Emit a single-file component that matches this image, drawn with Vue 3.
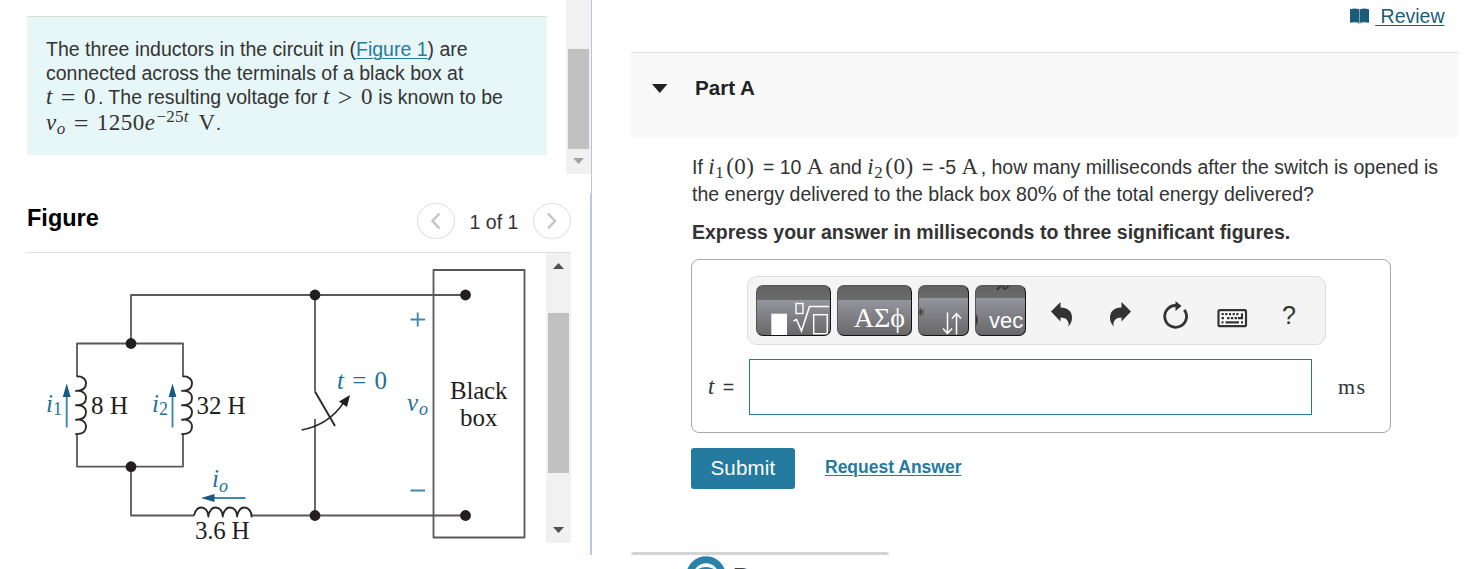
<script setup>
const coilV = (x, y) => `M${x} ${y}` + 'c3 -.5 9 1 9 7c0 6 -5 7.400 -10 7.400l1 0'.repeat(4)
const coilH = 'M194 515.5' + 'c1 -4 3 -8 7.200 -8c4.200 0 7.200 4 7.200 9l0 -1'.repeat(4)
const nodes = [[131, 343.5], [131, 466.700], [315, 295], [315, 515.5], [465.5, 295], [465.5, 515.5]]
</script>

<template>
  <div class="page">
    <aside class="left">
      <section class="top-pane">
        <div class="intro">
          <p class="ln a">The three inductors in the circuit in (<a>Figure 1</a>) are</p>
          <p class="ln b">connected across the terminals of a black box at</p>
          <p class="ln c"><span class="m eq"><i>t</i><span class="op">=</span>0</span>. The resulting voltage for <span class="m"><i>t</i><span class="op">&gt;</span>0</span> is known to be</p>
          <p class="ln d"><span class="m"><i>v<sub>o</sub></i><span class="op">=</span>1250<i>e</i><sup>−25<i>t</i></sup><span class="unit">V</span></span>.</p>
        </div>
        <div class="bar bar1">
          <div class="thumb"></div>
          <svg class="dn" width="11" height="6"><path d="M0 0h11L5.500 6z" fill="#a3a3a3" /></svg>
        </div>
      </section>
      <section class="figure">
        <header>
          <h2>Figure</h2>
          <span class="round"><svg width="12" height="18"><path d="M9.500 1.500L2.500 9l7 7.500" /></svg></span>
          <span class="count">1 of 1</span>
          <span class="round"><svg width="12" height="18"><path d="M2 1.500L9 9L2 16.500" /></svg></span>
        </header>
        <div class="canvas">
          <svg class="circuit" width="519" height="290" viewBox="27 253 519 290">
            <g fill="none" stroke="#5a5859" stroke-width="1.800" stroke-linejoin="round">
              <path d="M465.500 295H131V343.500M77 377V343.500H183V377M77 434V466.700H183V434M131 466.700V515.500H194M252 515.500H465.500M315 295V391.500M315 419V515.500" />
              <rect x="433.500" y="270" width="91" height="267.500" />
              <g stroke="#2c2829" stroke-width="1.900">
                <path :d="coilV(77, 376.500)" /><path :d="coilV(183, 376.500)" /><path :d="coilH" />
                <path d="M315 391.500L335 426" />
                <path d="M301.500 430Q329 425 344 402" stroke-width="1.500" />
              </g>
            </g>
            <path d="M350 395l-3 12l-8 -5.500z" fill="#231f20" />
            <circle v-for="(n, i) in nodes" :key="i" :cx="n[0]" :cy="n[1]" r="5.400" fill="#231f20" />
            <g stroke="#3f88ab" stroke-width="1.900"><path d="M66.700 427.500V395M172.500 427.500V395M245.500 498H213M410.500 319.500H425M417.700 312.500V326.500M410.500 490.500H425" /></g>
            <path d="M66.700 383.500l3.900 13.500h-7.800zM172.500 383.500l3.900 13.500h-7.800zM201 498l13.500 -3.900v7.800z" fill="#175a84" />
            <g class="dark">
              <text x="91" y="413.500" textLength="37">8 H</text>
              <text x="196.500" y="413.500" textLength="49">32 H</text>
              <text x="195" y="538.500" textLength="54.500">3.6 H</text>
              <text x="450" y="398.500" textLength="57.500">Black</text>
              <text x="460" y="425.500" textLength="37.500">box</text>
            </g>
            <g class="blue">
              <text x="46" y="411.500"><tspan font-style="italic">i</tspan><tspan dy="3.500" font-size="18">1</tspan></text>
              <text x="152" y="411.500"><tspan font-style="italic">i</tspan><tspan dy="3.500" font-size="18">2</tspan></text>
              <text x="212" y="487" font-style="italic">i<tspan dy="5" font-size="18">o</tspan></text>
              <text x="407" y="411" font-style="italic">v<tspan dy="4" dx="1" font-size="18">o</tspan></text>
              <text x="337" y="389" textLength="50"><tspan font-style="italic">t</tspan> = 0</text>
            </g>
          </svg>
          <div class="bar bar2">
            <svg width="11" height="6"><path d="M0 6h11L5.500 0z" fill="#505050" /></svg>
            <div class="thumb"></div>
            <svg width="11" height="6"><path d="M0 0h11L5.500 6z" fill="#505050" /></svg>
          </div>
        </div>
      </section>
    </aside>

    <main class="right">
      <div class="review">
        <svg width="19" height="16" viewBox="0 0 19 16"><path d="M0 1.200Q5 0 9 1.200V14.800Q5 13.600 0 14.800zM10 1.200Q14 0 19 1.200V14.800Q14 13.600 10 14.800z" fill="#1b5d78" /><path d="M7.500 15h4M9.500 1.500V15" stroke="#7fa5b3" /></svg>
        <a>&nbsp;Review</a>
      </div>
      <header class="part">
        <svg width="16" height="10"><path d="M0 0h15.500L7.750 9z" fill="#222" /></svg>
        <h3>Part A</h3>
      </header>
      <div class="body">
        <p class="q q1">If <span class="m f"><i>i</i><sub>1</sub>(0)</span> = 10 <span class="m">A</span> and <span class="m f"><i>i</i><sub>2</sub>(0)</span> = -5 <span class="m last">A</span>, how many milliseconds after the switch is opened is</p>
        <p class="q q2">the energy delivered to the black box 80<span class="m pct">%</span> of the total energy delivered?</p>
        <p class="q q3">Express your answer in milliseconds to three significant figures.</p>
        <div class="answer">
          <div class="tools">
            <button class="key wide">
              <svg width="73" height="49" viewBox="757 286 73 49"><rect x="771.300" y="313.700" width="15.700" height="21.300" fill="#fff" /><g fill="none" stroke="#fff"><rect x="796" y="303.500" width="7" height="10" stroke-width="1.400" /><rect x="813.700" y="314.700" width="13.500" height="19" stroke-width="1.400" /><path d="M793.500 321l3 -1.500l5 11.500l8 -24.500H829" stroke-width="1.600" /></g></svg>
            </button>
            <button class="key wide"><span class="greek">ΑΣϕ</span></button>
            <button class="key small">
              <svg width="49" height="49" viewBox="919 286 49 49"><path d="M920.500 308v8M917 310l7 4M917 314l7 -4" stroke="#444" stroke-width="1.300" /><g fill="none" stroke="#fff" stroke-width="1.500"><path d="M947.500 312.500V333M943 328.500l4.500 5l4.500 -5M956.500 334.500V313.500M952 318.500l4.500 -5l4.500 5" /></g></svg>
            </button>
            <button class="key small"><svg width="49" height="49" viewBox="976 286 49 49"><path d="M997 289.500l4 -3.500l2 -1M1003.500 285v3q1 2 3 0l3 -3M975.500 315q3 5 0 10" fill="none" stroke="#333" stroke-width="1.700" /></svg><span class="vec">vec</span></button>
            <svg class="icons" width="265" height="40" viewBox="1045 296 265 40">
              <path d="M1051 311.500l9.500 -9.500v5.500q11.500 .5 11.500 10.500q0 4.500 -3.500 8.500q1 -9 -8 -9v4z" fill="#333" />
              <path d="M1131 311.500l-9.500 -9.500v5.500q-11.500 .5 -11.500 10.500q0 4.500 3.500 8.500q-1 -9 8 -9v4z" fill="#333" />
              <path d="M1176 305.500a10.900 10.900 0 1 0 8.300 4.300" fill="none" stroke="#333" stroke-width="2.800" />
              <path d="M1175.500 301l6 5l-6 5z" fill="#333" />
              <rect x="1218.500" y="310.200" width="27.500" height="16" rx="1.500" fill="#fff" stroke="#333" stroke-width="2.200" />
              <g stroke="#333" stroke-width="2.200" fill="none"><path d="M1221.500 314.200H1240" stroke-dasharray="2.200 1.500" /><path d="M1221.500 318.200h3.500M1227 318.200H1238" stroke-dasharray="2.500 1.300" /><path d="M1221.500 322.300h2M1225.500 322.300H1239M1241 322.300h2M1242 313.200V318.200H1238" /></g>
              <text x="1282" y="324" class="qm">?</text>
            </svg>
          </div>
          <div class="entry">
            <span class="lab"><i>t</i> =</span>
            <input type="text" />
            <span class="ms">ms</span>
          </div>
        </div>
        <div class="actions">
          <button class="submit">Submit</button>
          <a>Request Answer</a>
        </div>
      </div>
      <footer>
        <svg width="40" height="14" viewBox="686 555 40 14"><circle cx="706" cy="576" r="16.300" fill="none" stroke="#2a82a8" stroke-width="7" /><path d="M698 569q8 -4 16 0z" fill="#2a82a8" /></svg>
        <span class="brand">P</span>
      </footer>
    </main>
  </div>
</template>

<style>
html, body { margin: 0; overflow: hidden; background: #fff; }
</style>
<style scoped>
* { box-sizing: border-box; }
.page { display: flex; width: 1482px; height: 569px; overflow: hidden; font-family: "Liberation Sans", Arial, sans-serif; font-size: 19.500px; color: #333; }
p, h2, h3 { margin: 0; }
.left { width: 592px; height: 555px; display: flex; flex-direction: column; flex: none; }
.top-pane { height: 193px; display: flex; border-right: 1px solid #b9c6da; padding-left: 27px; }
.intro { width: 520px; height: 139px; margin-top: 16px; border-top: 1px solid #ddd; background: #e7f6f6; padding: 20px 0 0 19px; flex: none; }
.ln { line-height: 24px; height: 24px; white-space: nowrap; }
.ln.d { padding-top: 2px; }
a { color: #257a9f; text-decoration: underline; text-decoration-thickness: 1px; text-underline-offset: 2px; }
.m { font-family: "Liberation Serif", "Times New Roman", serif; font-size: 23px; line-height: 0; letter-spacing: .5px; }
.m sub, .m sup { font-size: 17px; line-height: 0; }
.m sub { vertical-align: -4px; }
.m sup { vertical-align: 8px; margin: 0 2px 0 1px; letter-spacing: .2px; }
.eq { margin-right: 2px; }
.f { margin-right: 3px; }
.f sub { margin-right: 2px; }
.last { margin-right: 2px; }
.pct { letter-spacing: 0; }
.op { display: inline-block; width: 31px; text-align: center; font-size: 26px; vertical-align: -2px; }
.unit { margin-left: 8px; }
.bar { width: 25px; background: #f1f1f1; display: flex; flex-direction: column; align-items: center; }
.bar svg, .round svg, .circuit, .icons, .key svg { display: block; }
.bar .thumb { width: 21px; background: #c1c1c1; }
.bar1 { height: 174px; margin-left: 19px; padding-top: 49px; }
.bar1 .thumb { height: 100px; margin-bottom: 9px; }
.figure { height: 362px; border-right: 2px solid #b9c9df; padding-left: 27px; }
.figure header { width: 544px; height: 60px; border-bottom: 1px solid #ddd; display: flex; align-items: center; padding-bottom: 4px; }
h2 { font-size: 23.500px; color: #000; line-height: 28px; width: 390px; margin-top: -6px; }
.round { width: 38px; height: 36px; border: 1px solid #e2e2e2; border-radius: 50%; display: flex; align-items: center; justify-content: center; }
.round path { fill: none; stroke: #c4c4c4; stroke-width: 2.500; }
.count { width: 78px; text-align: center; font-size: 19.500px; margin-top: 4px; }
.canvas { display: flex; height: 290px; }
.bar2 { height: 290px; padding-top: 10px; }
.bar2 .thumb { height: 160px; margin: 44px 0 54px; }
.circuit text { font-family: "Liberation Serif", serif; font-size: 25px; }
.dark { fill: #231f20; }
.blue { fill: #24709b; }
.right { width: 827px; margin-left: 39px; flex: none; }
.review { height: 52px; display: flex; justify-content: flex-end; padding: 4px 13.500px 0 0; font-size: 19.500px; line-height: 24px; }
.review svg { margin: 4px 6px 0 0; }
.review a { color: #1b5d78; }
.part { height: 85px; background: #f9f9f9; border-top: 1px solid #ddd; display: flex; padding: 23px 0 0 21px; }
.part svg { margin: 8px 27px 0 0; }
h3 { font-size: 20.600px; line-height: 24px; color: #222; }
.body { padding: 17px 0 0 60px; }
.q { white-space: nowrap; height: 27px; line-height: 27px; padding-left: 1px; }
.q3 { font-weight: bold; margin-top: 11px; }
.answer { width: 700px; height: 174px; margin-top: 13px; border: 1px solid #aaa; border-radius: 8px; padding: 16px 0 0 55px; }
.tools { width: 579px; height: 69px; background: #f4f4f4; border: 1px solid #ddd; border-radius: 10px; display: flex; padding: 8px; gap: 6px; }
.key { height: 51px; border: 1px solid #555; border-right: 1.500px solid #111; border-bottom: 1.500px solid #111; border-radius: 7px; padding: 0; background: linear-gradient(#626262 0, #6b6b6b 14px, #95959d 14px, #7b7b80 34px, #69696b 100%); position: relative; overflow: hidden; color: #fff; flex: none; }
.wide { width: 75px; }
.small { width: 51px; background: linear-gradient(#626262 0, #6b6b6b 12px, #95959d 12px, #7b7b80 32px, #69696b 100%); }
.greek { position: absolute; right: 6px; top: 16px; font: 28px/32px "Liberation Serif", serif; }
.vec { position: absolute; left: 13px; top: 22px; font: 22px/25px "Liberation Sans", sans-serif; }
.icons { margin: 11px 0 0 13px; flex: none; }
.qm { font-size: 25px; fill: #333; }
.entry { display: flex; align-items: center; margin: 14px 0 0 -39px; }
.lab { width: 41px; font-size: 19.500px; white-space: nowrap; }
.lab i { font-family: "Liberation Serif", serif; font-size: 23px; margin-right: 3px; }
input { width: 563px; height: 56px; border: 1px solid #257a9f; padding: 0; background: #fff; }
.ms { font-family: "Liberation Serif", serif; font-size: 22px; letter-spacing: 1.500px; margin-left: 26px; }
.actions { display: flex; margin-top: 15px; }
.submit { width: 104px; height: 41px; border: 0; border-radius: 3px; background: #257a9f; color: #fff; font: 20.500px/24px "Liberation Sans", sans-serif; padding: 0 0 2px; letter-spacing: .2px; }
.actions a { margin: 8px 0 0 30px; font-weight: bold; font-size: 17.500px; line-height: 22px; }
footer { width: 258px; margin-top: 63px; border-top: 3px solid #d5d5d5; border-radius: 3px 3px 0 0; height: 17px; overflow: hidden; display: flex; padding-left: 55px; }
.brand { margin: 7px 0 0 7px; font-size: 25px; line-height: 30px; color: #444; font-weight: bold; }
</style>
